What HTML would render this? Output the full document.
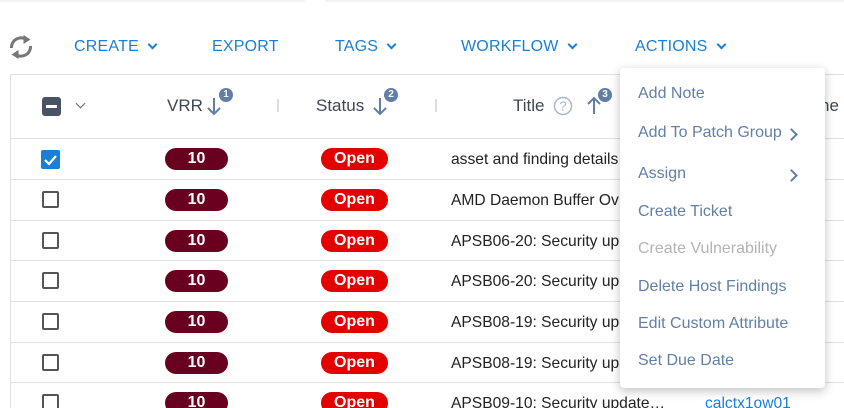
<!DOCTYPE html>
<html><head><meta charset="utf-8"><style>
*{margin:0;padding:0;box-sizing:border-box}
html,body{width:844px;height:408px;overflow:hidden}
body{background:#fff;font-family:"Liberation Sans",sans-serif;position:relative}
.top{position:absolute;top:0;height:3px;background:linear-gradient(#eee,#fff)}
.tb{position:absolute;top:38px;font-size:16px;color:#1a7fd6;letter-spacing:.2px}
.chev{display:inline-block;width:7px;height:7px;border-right:2px solid #1a7fd6;border-bottom:2px solid #1a7fd6;transform:rotate(45deg);margin-left:10px;position:relative;top:-3px}
.table{position:absolute;left:10px;top:74px;width:834px;height:334px;border-left:1px solid #e0e0e0;border-top:1px solid #e0e0e0}
.hl{position:absolute;left:11px;width:833px;height:1px;background:#e0e0e0}
.h{position:absolute;top:96px;font-size:17px;color:#3d4653}
.cb{position:absolute;left:42px;width:17px;height:17px;border:2px solid #555;border-radius:2px}
.vrr{position:absolute;left:165px;width:63px;height:22px;border-radius:11px;background:#6a0020;color:#fff;font-weight:bold;font-size:16px;text-align:center;line-height:22px}
.open{position:absolute;left:321px;width:67px;height:22px;border-radius:11px;background:#e50000;color:#fff;font-weight:bold;font-size:16px;text-align:center;line-height:22px}
.t{position:absolute;left:451px;font-size:15.6px;color:#222;white-space:nowrap;line-height:18px}
.menu{position:absolute;left:620px;top:68px;width:205px;height:320px;background:#fff;border-radius:4px;box-shadow:0 3px 10px rgba(0,0,0,.25)}
.mi{position:absolute;left:18px;font-size:16px;color:#6280a6;white-space:nowrap}
.arr{position:absolute;left:167px;width:9px;height:9px;border-right:2px solid #6280a6;border-top:2px solid #6280a6;transform:rotate(45deg)}
.badge{position:absolute;width:14px;height:14px;border-radius:50%;background:#637ea6;color:#fff;font-size:10px;font-weight:bold;text-align:center;line-height:14px}
.sep{position:absolute;top:99px;width:2px;height:13px;background:#ddd}
.bot{overflow:hidden;position:absolute;left:0;top:383px;width:844px;height:25px}
</style></head><body>
<div class="top" style="left:0;width:305px"></div>
<div class="top" style="left:325px;width:519px"></div>
<svg style="position:absolute;left:8px;top:32px" width="26" height="30" viewBox="0 0 26 30"><path d="M3.5 16a9.5 9.5 0 0 1 15.5-8" fill="none" stroke="#777" stroke-width="3"/><path d="M15.5 3l7 4.5-7 4.5z" fill="#777"/><path d="M22.5 14a9.5 9.5 0 0 1-15.5 8" fill="none" stroke="#777" stroke-width="3"/><path d="M10.5 27l-7-4.5 7-4.5z" fill="#777"/></svg>
<div class="tb" style="left:74px">CREATE<span class="chev"></span></div>
<div class="tb" style="left:212px">EXPORT</div>
<div class="tb" style="left:335px">TAGS<span class="chev"></span></div>
<div class="tb" style="left:461px">WORKFLOW<span class="chev"></span></div>
<div class="tb" style="left:635px">ACTIONS<span class="chev"></span></div>
<div class="table"></div>
<div class="hl" style="top:138px"></div><div class="hl" style="top:179px"></div><div class="hl" style="top:220px"></div><div class="hl" style="top:260px"></div><div class="hl" style="top:301px"></div><div class="hl" style="top:342px"></div><div class="hl" style="top:382px"></div>
<div style="position:absolute;left:42px;top:97px;width:19px;height:19px;background:#4a5366;border-radius:3px"><div style="position:absolute;left:4px;top:8px;width:11px;height:2.5px;background:#fff"></div></div>
<div style="position:absolute;left:77px;top:100px;width:7px;height:7px;border-right:1.5px solid #666;border-bottom:1.5px solid #666;transform:rotate(45deg)"></div>
<div class="h" style="left:167px">VRR</div>
<svg style="position:absolute;left:206px;top:96px" width="16" height="20"><path d="M8 2v16M2 12l6 6 6-6" fill="none" stroke="#637ea6" stroke-width="2"/></svg>
<div class="badge" style="left:219px;top:88px">1</div>
<div class="sep" style="left:277px"></div>
<div class="h" style="left:316px">Status</div>
<svg style="position:absolute;left:372px;top:96px" width="16" height="20"><path d="M8 2v16M2 12l6 6 6-6" fill="none" stroke="#637ea6" stroke-width="2"/></svg>
<div class="badge" style="left:384px;top:88px">2</div>
<div class="sep" style="left:435px"></div>
<div class="h" style="left:513px">Title</div>
<svg style="position:absolute;left:553px;top:96px" width="20" height="20"><circle cx="10" cy="10" r="8.5" fill="none" stroke="#a8b7cc" stroke-width="1.5"/><text x="10" y="14.5" text-anchor="middle" font-size="13" fill="#a8b7cc" font-family="Liberation Sans">?</text></svg>
<svg style="position:absolute;left:586px;top:96px" width="16" height="20"><path d="M8 18V2M2 8l6-6 6 6" fill="none" stroke="#637ea6" stroke-width="2"/></svg>
<div class="badge" style="left:598px;top:88px">3</div>
<div class="h" style="left:820px">ne</div>
<div style="position:absolute;left:41px;top:150px;width:19px;height:19px;background:#1a7fd6;border-radius:2px"><svg width="19" height="19"><path d="M4 10l4 4 7-8" fill="none" stroke="#fff" stroke-width="2.2"/></svg></div>
<div class="cb" style="top:191px"></div><div class="cb" style="top:232px"></div><div class="cb" style="top:272px"></div><div class="cb" style="top:313px"></div><div class="cb" style="top:354px"></div>
<div class="vrr" style="top:148px">10</div><div class="vrr" style="top:189px">10</div><div class="vrr" style="top:230px">10</div><div class="vrr" style="top:270px">10</div><div class="vrr" style="top:311px">10</div><div class="vrr" style="top:352px">10</div>
<div class="open" style="top:148px">Open</div><div class="open" style="top:189px">Open</div><div class="open" style="top:230px">Open</div><div class="open" style="top:270px">Open</div><div class="open" style="top:311px">Open</div><div class="open" style="top:352px">Open</div>
<div class="t" style="top:151px">asset and finding details</div>
<div class="t" style="top:192px">AMD Daemon Buffer Ov</div>
<div class="t" style="top:233px">APSB06-20: Security up</div>
<div class="t" style="top:273px">APSB06-20: Security up</div>
<div class="t" style="top:314px">APSB08-19: Security up</div>
<div class="t" style="top:355px">APSB08-19: Security up</div>
<div class="bot">
<div class="cb" style="top:11px"></div>
<div class="vrr" style="top:9px">10</div>
<div class="open" style="top:9px">Open</div>
<div class="t" style="top:12px">APSB09-10: Security update…</div>
<div class="t" style="top:12px;left:705px;color:#1a7fd6">calctx1ow01</div>
</div>
<div class="menu">
<div class="mi" style="top:17px">Add Note</div>
<div class="mi" style="top:56px">Add To Patch Group</div><div class="arr" style="top:62px"></div>
<div class="mi" style="top:97px">Assign</div><div class="arr" style="top:103px"></div>
<div class="mi" style="top:135px">Create Ticket</div>
<div class="mi" style="top:172px;color:#b4b4b4">Create Vulnerability</div>
<div class="mi" style="top:210px">Delete Host Findings</div>
<div class="mi" style="top:247px">Edit Custom Attribute</div>
<div class="mi" style="top:284px">Set Due Date</div>
</div>
</body></html>
